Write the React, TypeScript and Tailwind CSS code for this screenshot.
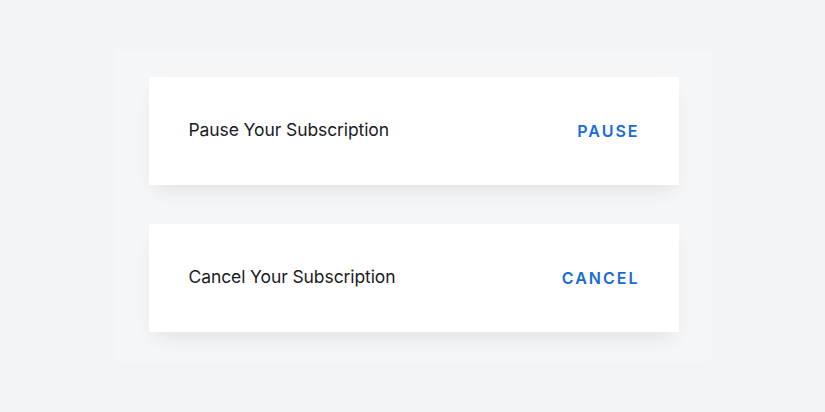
import React from 'react';

const rows = [
  { label: 'Pause Your Subscription', action: 'PAUSE' },
  { label: 'Cancel Your Subscription', action: 'CANCEL' },
];

const App: React.FC = () => {
  return (
    <div className="w-[825px] h-[412px] bg-[#f3f4f6] flex items-center justify-center font-['Inter',sans-serif]">
      <div className="w-[596px] h-[312px] bg-[#f5f6f8] flex flex-col items-center justify-center gap-[39px] pb-[4px] pl-[2px] rounded-sm">
        {rows.map(r => (
          <div
            key={r.action}
            className="w-[530px] h-[108px] bg-white flex items-center justify-between pl-[40px] pr-[39px] shadow-[0_10px_20px_-6px_rgba(0,0,0,0.09)]"
          >
            <span className="text-[17.5px] text-[#1a1b1f] tracking-[-0.1px]">{r.label}</span>
            <button className="text-[16px] font-semibold text-[#1a6bd6] tracking-[2px]">{r.action}</button>
          </div>
        ))}
      </div>
    </div>
  );
};

export default App;
